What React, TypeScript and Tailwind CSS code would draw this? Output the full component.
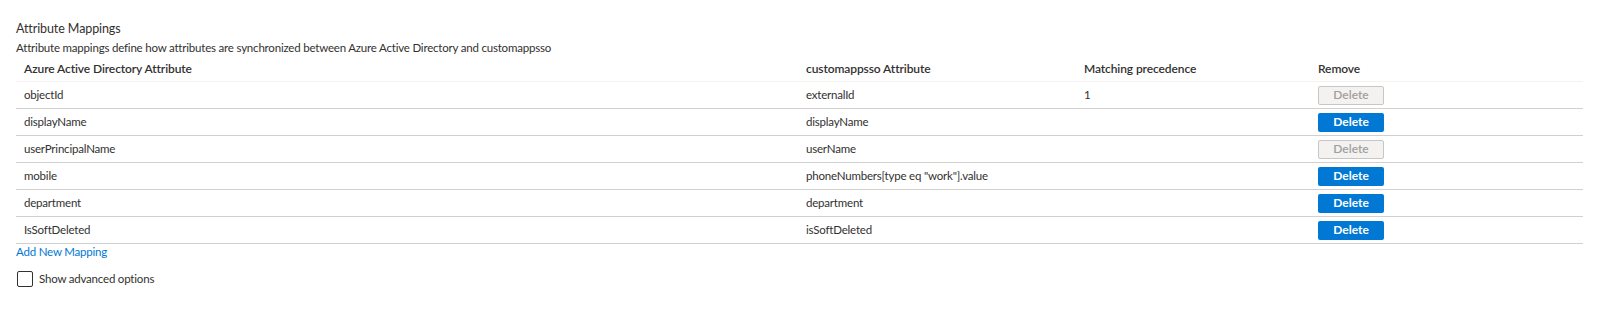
import { useState } from 'react'

interface Mapping {
  source: string
  target: string
  precedence?: string
  required?: boolean
}

const mappings: Mapping[] = [
  { source: 'objectId', target: 'externalId', precedence: '1', required: true },
  { source: 'displayName', target: 'displayName' },
  { source: 'userPrincipalName', target: 'userName', required: true },
  { source: 'mobile', target: 'phoneNumbers[type eq "work"].value' },
  { source: 'department', target: 'department' },
  { source: 'IsSoftDeleted', target: 'isSoftDeleted' },
]

const cols = 'grid grid-cols-[782px_278px_234px_1fr]'

function DeleteButton({ disabled }: { disabled?: boolean }) {
  if (disabled) {
    return (
      <button
        type="button"
        disabled
        className="h-[19px] w-[66px] rounded-[2px] border border-[#c8c6c4] bg-[#f3f2f1] text-[12px] font-semibold leading-none tracking-normal text-[#a19f9d]"
      >
        Delete
      </button>
    )
  }
  return (
    <button
      type="button"
      className="h-[19px] w-[66px] rounded-[2px] bg-[#0078d4] text-[12px] font-bold leading-none tracking-normal text-white"
    >
      Delete
    </button>
  )
}

export default function App() {
  const [advanced, setAdvanced] = useState(false)

  return (
    <div className="min-h-[330px] bg-white px-4 pt-[20px] font-['Lato',sans-serif] text-[11.5px] tracking-[-0.2px] text-[#323130]">
      <h2 className="text-[12.5px] leading-[18px] tracking-[-0.1px]">Attribute Mappings</h2>
      <p className="mt-[1px] leading-[18px]">
        Attribute mappings define how attributes are synchronized between Azure Active Directory and customappsso
      </p>

      <div className="w-[1567px]">
        <div className={cn(cols, 'h-[25px] items-center border-b border-[#f3f2f1] text-[12px] font-semibold tracking-[-0.1px]')}>
          <div className="px-2">Azure Active Directory Attribute</div>
          <div className="px-2">customappsso Attribute</div>
          <div className="px-2">Matching precedence</div>
          <div className="px-2">Remove</div>
        </div>
        {mappings.map((m) => (
          <div key={m.source} className={cn(cols, 'h-[27px] items-center border-b border-[#d2d0ce]')}>
            <div className="px-2">{m.source}</div>
            <div className="px-2">{m.target}</div>
            <div className="px-2">{m.precedence}</div>
            <div className="px-2">
              <DeleteButton disabled={m.required} />
            </div>
          </div>
        ))}
      </div>

      <a href="#" className="block leading-[16px] text-[#0078d4]">
        Add New Mapping
      </a>

      <label className="mt-[10px] flex items-center gap-[6px]">
        <input
          type="checkbox"
          checked={advanced}
          onChange={(e) => setAdvanced(e.target.checked)}
          className="peer sr-only"
        />
        <span className="ml-[1px] h-[16px] w-[16px] rounded-[2px] border border-[#323130] bg-white peer-checked:bg-[#0078d4]" />
        <span className="leading-[18px]">Show advanced options</span>
      </label>
    </div>
  )
}

function cn(...parts: string[]) {
  return parts.join(' ')
}
